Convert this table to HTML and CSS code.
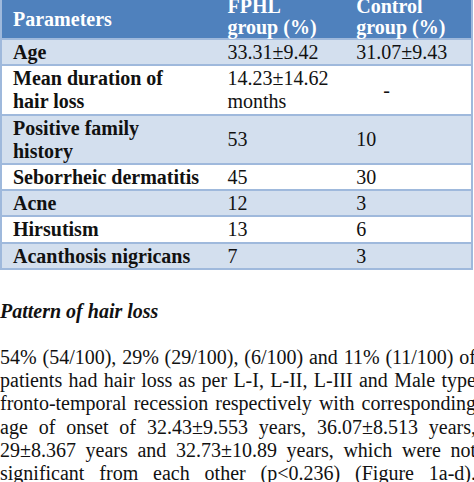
FILE: index.html
```html
<!DOCTYPE html>
<html>
<head>
<meta charset="utf-8">
<link rel="stylesheet" href="styles.css">
</head>
<body>
<div class="page">
  <table class="data">
    <colgroup>
      <col class="c1"><col class="c2"><col class="c3">
    </colgroup>
    <thead>
      <tr class="head">
        <th class="mid">Parameters</th>
        <th>FPHL<br>group (%)</th>
        <th>Control<br>group (%)</th>
      </tr>
    </thead>
    <tbody>
      <tr class="shade"><th>Age</th><td>33.31±9.42</td><td>31.07±9.43</td></tr>
      <tr><th>Mean duration of<br>hair loss</th><td>14.23±14.62<br>months</td><td class="dash">-</td></tr>
      <tr class="shade"><th>Positive family<br>history</th><td>53</td><td>10</td></tr>
      <tr><th>Seborrheic dermatitis</th><td>45</td><td>30</td></tr>
      <tr class="shade"><th>Acne</th><td>12</td><td>3</td></tr>
      <tr><th>Hirsutism</th><td>13</td><td>6</td></tr>
      <tr class="shade"><th>Acanthosis nigricans</th><td>7</td><td>3</td></tr>
    </tbody>
  </table>
  <h3 class="sub">Pattern of hair loss</h3>
  <p class="body">54% (54/100), 29% (29/100), (6/100) and 11% (11/100) of patients had hair loss as per L-I, L-II, L-III and Male type fronto-temporal recession respectively with corresponding age of onset of 32.43±9.553 years, 36.07±8.513 years, 29±8.367 years and 32.73±10.89 years, which were not significant from each other (p&lt;0.236) (Figure 1a-d).</p>
</div>
</body>
</html>
```

FILE: styles.css
```css
html, body {
  margin: 0;
  padding: 0;
  background: #ffffff;
}
body {
  width: 474px;
  height: 482px;
  overflow: hidden;
  font-family: "Liberation Serif", "Times New Roman", serif;
  color: #111111;
}
.page {
  margin-top: -4px;
  width: 474px;
}
.data {
  border-collapse: collapse;
  width: 473px;
  font-size: 20px;
  line-height: 23.2px;
  border-left: 2px solid #9fb9dc;
  border-right: 2px solid #9fb9dc;
}
.c1 { width: 217px; }
.c2 { width: 129px; }
.c3 { width: 127px; }
.data th, .data td {
  text-align: left;
  vertical-align: middle;
  padding: 1px 4px 0 11px;
  border-bottom: 2px solid #9fb9dc;
}
.data th { font-weight: bold; }
.data td { font-weight: normal; }
.data .head th {
  background: #4f81bd;
  color: #ffffff;
  line-height: 21px;
  padding-top: 0;
  padding-bottom: 0;
}
.data .head th.mid { padding-top: 4px; }
.shade th, .shade td { background: #d3dfee; }
.data td.dash { padding-left: 38px; }
.sub {
  margin: 30px 0 0 0;
  font-size: 20px;
  line-height: 23px;
  font-weight: bold;
  font-style: italic;
}
.body {
  margin: 23px 0 0 0;
  width: 476px;
  font-size: 20px;
  line-height: 23.3px;
  text-align: justify;
  text-align-last: justify;
}
```
